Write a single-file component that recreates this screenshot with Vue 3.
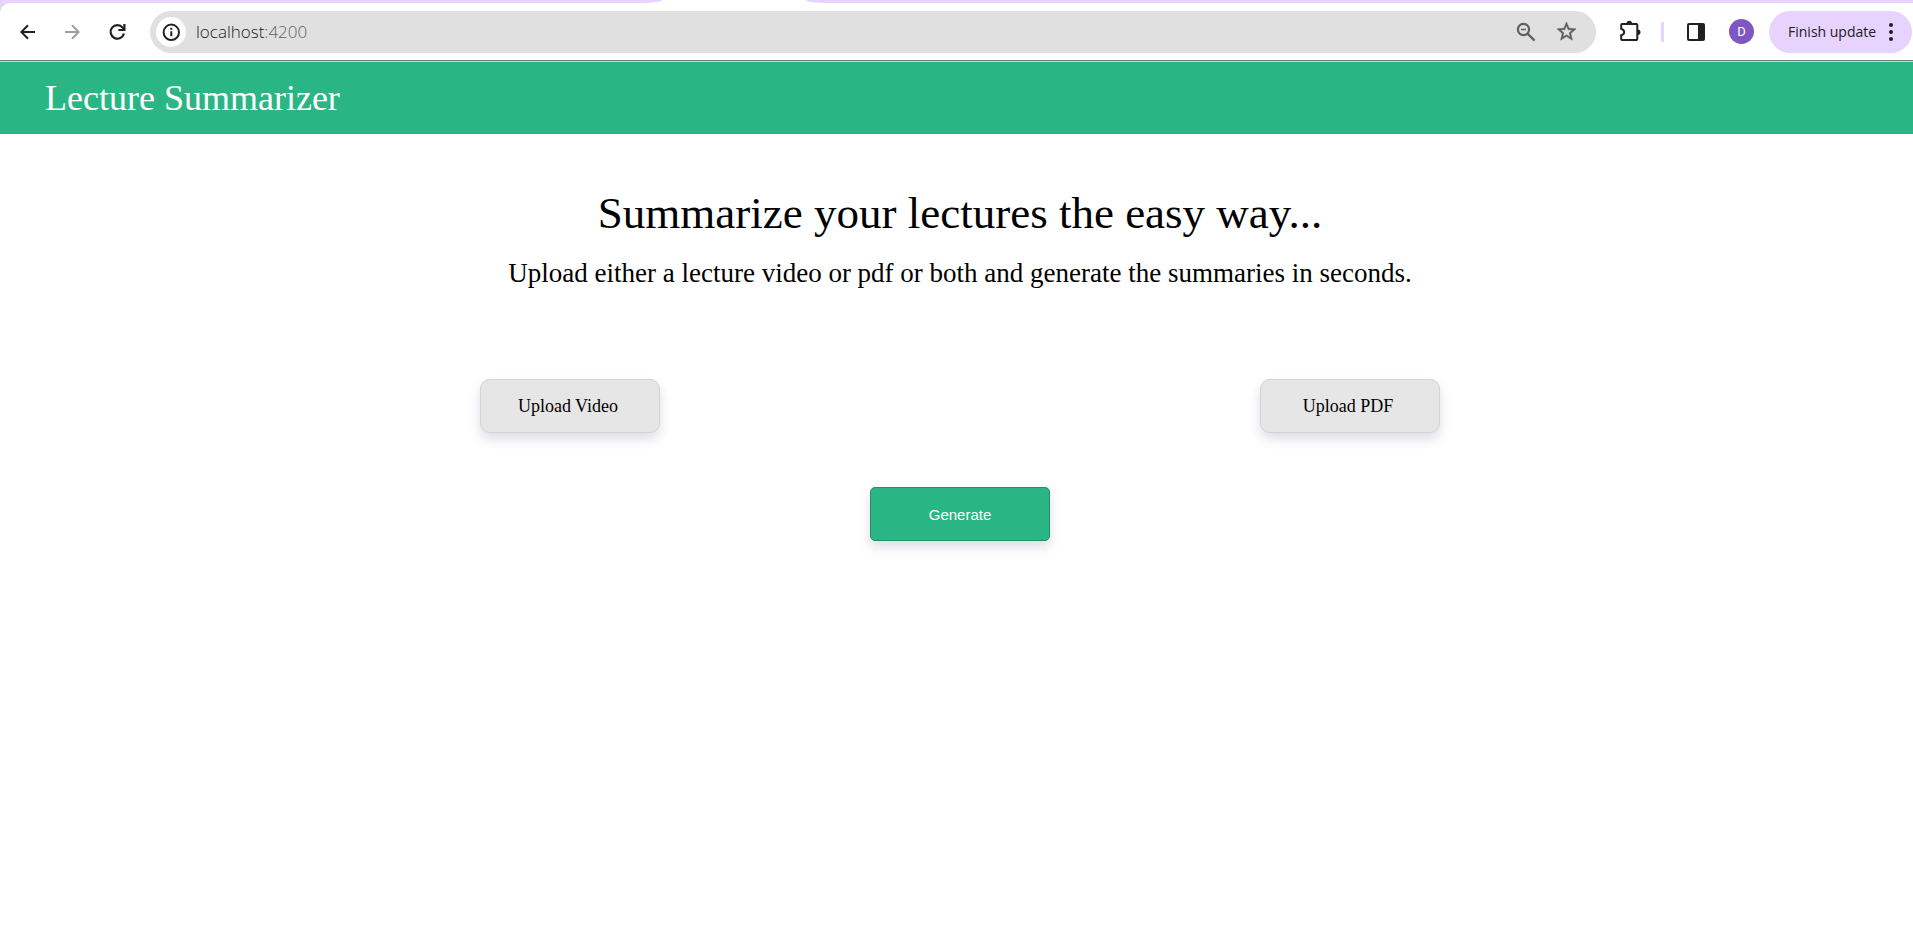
<template>
  <div class="browser">
    <div class="tab-strip">
      <span class="tabs-left"></span>
      <span class="tabs-right"></span>
    </div>
    <div class="toolbar">
      <button class="icon-button" aria-label="Back">
        <svg width="20" height="20" viewBox="0 0 20 20" fill="none" stroke="#202124" stroke-width="2">
          <path d="M17 10H4M10 3.200 3.400 10l6.600 6.800" />
        </svg>
      </button>
      <button class="icon-button" aria-label="Forward">
        <svg width="20" height="20" viewBox="0 0 20 20" fill="none" stroke="#a0a0a0" stroke-width="2">
          <path d="M2 10H15M9 3.200 15.600 10 9 16.800" />
        </svg>
      </button>
      <button class="icon-button" aria-label="Reload">
        <svg width="20" height="20" viewBox="0 0 20 20" fill="none" stroke="#202124" stroke-width="2.200">
          <path d="M16 11.500A6.800 6.800 0 1 1 14.700 5.600L15.800 7" />
          <path d="M16.400 2v6h-6" />
        </svg>
      </button>
      <div class="address-bar">
        <button class="site-info" aria-label="Site information">
          <svg width="20" height="20" viewBox="0 0 20 20" fill="none" stroke="#202124" stroke-width="2">
            <circle cx="10.300" cy="10.300" r="7.700" />
            <path d="M10.300 9.300v5M10.300 5.800v2" />
          </svg>
        </button>
        <span class="url">localhost<span class="port">:4200</span></span>
        <button class="icon-button" aria-label="Zoom">
          <svg width="20" height="20" viewBox="0 0 20 20" fill="none" stroke="#5f6061" stroke-width="2.200">
            <circle cx="7.500" cy="7.500" r="5.600" />
            <path d="M11.600 11.600l7 7" />
            <path d="M5 7.500h5" stroke-width="1.500" />
          </svg>
        </button>
        <button class="icon-button" aria-label="Bookmark">
          <svg width="23" height="23" viewBox="0 0 24 24" fill="#5f6061" stroke="#5f6061" stroke-width="0.500">
            <path d="M22 9.240l-7.190-.620L12 2 9.190 8.630 2 9.240l5.460 4.730L5.820 21 12 17.270 18.180 21l-1.630-7.030L22 9.240zM12 15.400l-3.760 2.270 1-4.280-3.320-2.880 4.380-.380L12 6.100l1.710 4.040 4.380.380-3.320 2.880 1 4.280L12 15.400z" />
          </svg>
        </button>
      </div>
      <button class="icon-button extensions" aria-label="Extensions">
        <svg width="24" height="24" viewBox="0 0 24 24">
          <path d="M4.200 4h14.100q1 0 1 1v14q0 1-1 1H4.200q-1 0-1-1v-3.700q3-.800 3-3.200t-3-3.400V5q0-1 1-1z" fill="none" stroke="#202124" stroke-width="2" />
          <path d="M8.600 3.500a2.700 2.700 0 0 1 5.400 0zM19.800 9.600a2.700 2.700 0 0 1 0 5.400z" fill="#202124" />
        </svg>
      </button>
      <span class="divider"></span>
      <button class="icon-button" aria-label="Side panel">
        <svg width="20" height="20" viewBox="0 0 20 20">
          <rect x="2" y="2" width="16" height="16" rx="1" fill="none" stroke="#202124" stroke-width="2" />
          <path d="M12 2h6v16h-6z" fill="#202124" />
        </svg>
      </button>
      <button class="avatar" aria-label="Profile">D</button>
      <button class="update">
        Finish update
        <svg width="6" height="20" viewBox="0 0 6 20" fill="#202124">
          <circle cx="3" cy="3" r="2" />
          <circle cx="3" cy="10" r="2" />
          <circle cx="3" cy="17" r="2" />
        </svg>
      </button>
    </div>
  </div>

  <header class="header">Lecture Summarizer</header>

  <main class="content">
    <h1 class="title">Summarize your lectures the easy way...</h1>
    <p class="subtitle">Upload either a lecture video or pdf or both and generate the summaries in seconds.</p>
    <div class="uploads">
      <button class="upload">Upload Video</button>
      <button class="upload">Upload PDF</button>
    </div>
    <button class="generate">Generate</button>
  </main>
</template>

<script setup>
</script>

<style>
body {
  margin: 0;
  background: #fff;
}
</style>

<style scoped>
button {
  box-sizing: border-box;
  margin: 0;
  padding: 0;
  border: none;
  background: none;
  cursor: pointer;
}

svg {
  display: block;
}

.browser {
  background: #e8d3ff;
  border-bottom: 1px solid #c9d6d0;
  font-family: "Open Sans", sans-serif;
}

.tab-strip {
  display: flex;
  justify-content: space-between;
  height: 3px;
  background: #fff;
}

.tabs-left,
.tabs-right {
  background: #e8d3ff;
}

.tabs-left {
  width: 662px;
  border-bottom-right-radius: 20px 3px;
}

.tabs-right {
  flex: 1;
  margin-left: 144px;
  border-bottom-left-radius: 20px 3px;
}

.toolbar {
  display: flex;
  align-items: center;
  box-sizing: border-box;
  height: 58px;
  padding: 0 1px 0 8px;
  background: #fff;
  border-bottom: 1px solid #777;
  border-top-left-radius: 10px;
}

.icon-button {
  display: flex;
  align-items: center;
  justify-content: center;
  flex: none;
  width: 40px;
  height: 40px;
}

.toolbar > .icon-button + .icon-button {
  margin-left: 5px;
}

.address-bar {
  display: flex;
  align-items: center;
  flex: 1;
  box-sizing: border-box;
  height: 42px;
  margin-left: 12px;
  padding: 0 10px 0 6px;
  border-radius: 21px;
  background: #e0e0e0;
}

.site-info {
  display: flex;
  align-items: center;
  justify-content: center;
  width: 30px;
  height: 30px;
  border-radius: 50%;
  background: #fff;
}

.url {
  flex: 1;
  margin-left: 10px;
  font-size: 17px;
  font-weight: 300;
  color: #202124;
}

.port {
  color: #5f6061;
}

.extensions {
  margin-left: 14px;
}

.divider {
  width: 3px;
  height: 20px;
  margin: 0 12px 0 11px;
  background: #e8d3ff;
}

.avatar {
  width: 25px;
  height: 25px;
  margin: 0 15px 0 13px;
  border-radius: 50%;
  background: #7e57c2;
  color: #fff;
  font-family: Roboto, sans-serif;
  font-size: 13px;
}

.update {
  display: flex;
  align-items: center;
  justify-content: space-between;
  width: 143px;
  height: 42px;
  padding: 0 18px 0 19px;
  border-radius: 21px;
  background: #e8d3ff;
  color: #202124;
  font-family: "Open Sans", sans-serif;
  font-size: 14px;
  white-space: nowrap;
}

.header {
  padding: 0 45px;
  background: #2ab584;
  color: #fff;
  font-family: "Liberation Serif", serif;
  font-size: 36px;
  line-height: 72px;
}

.content {
  display: flex;
  flex-direction: column;
  align-items: center;
  padding: 52px 0 52px 7px;
  color: #000;
  font-family: "Liberation Serif", serif;
}

.title {
  margin: 0;
  font-size: 45px;
  font-weight: normal;
  line-height: 54px;
}

.subtitle {
  margin: 16px 0 0;
  font-size: 27px;
  line-height: 34px;
}

.uploads {
  display: flex;
  justify-content: space-between;
  width: 960px;
  max-width: 100%;
  margin: 89px 0 54px;
}

.upload,
.generate {
  width: 180px;
  height: 54px;
  box-shadow: 0 6px 12px rgba(40, 50, 90, 0.16);
}

.upload {
  padding-right: 4px;
  border: 1px solid #d3d3d6;
  border-radius: 10px;
  background: #e6e6e6;
  color: #000;
  font-family: "Liberation Serif", serif;
  font-size: 18px;
}

.generate {
  border: 1px solid #23906a;
  border-radius: 5px;
  background: #2ab584;
  color: #fff;
  font-family: "Liberation Sans", sans-serif;
  font-size: 15px;
}
</style>
